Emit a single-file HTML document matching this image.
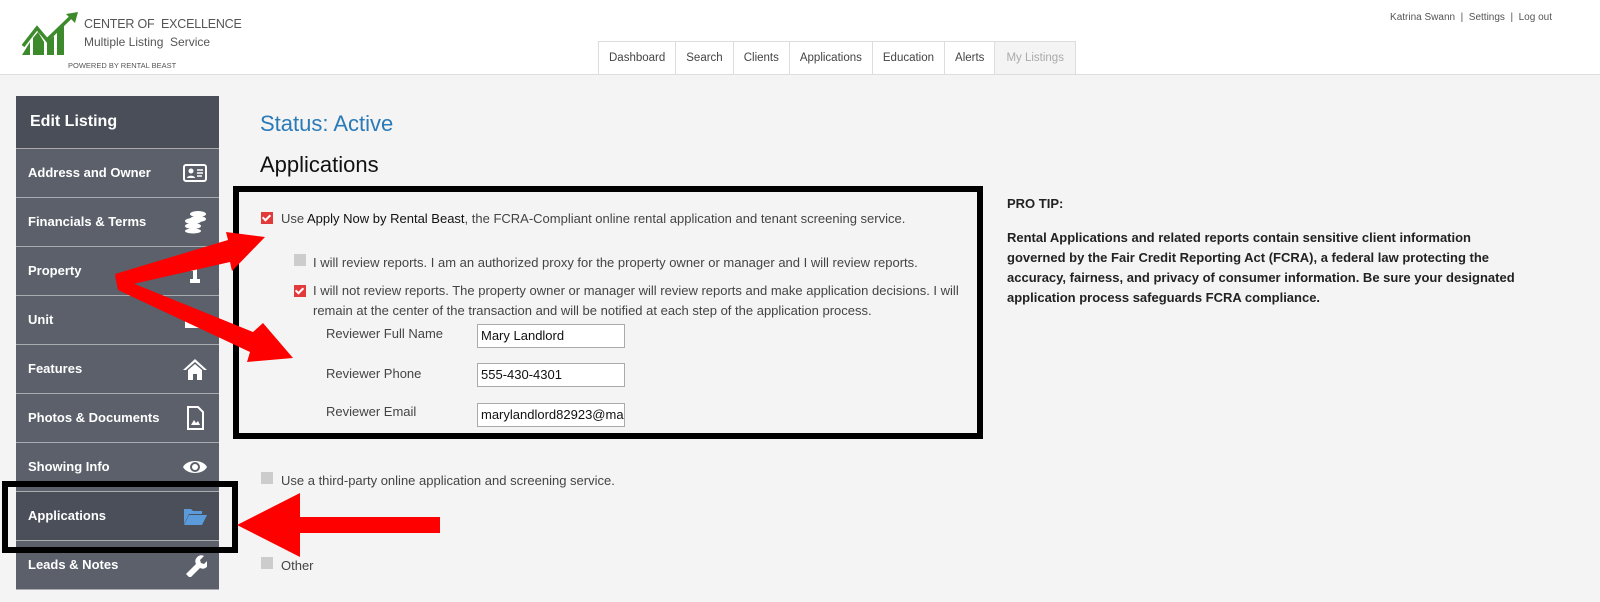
<!DOCTYPE html>
<html><head><style>
body{margin:0;width:1600px;height:602px;overflow:hidden;background:#f4f4f4;font-family:"Liberation Sans",sans-serif;position:relative}
.hdr{position:absolute;left:0;top:0;width:1600px;height:74px;background:#fff;border-bottom:1px solid #ddd}
.logo1{position:absolute;left:84px;top:17px;font-size:12.5px;color:#555;letter-spacing:-.2px}
.logo2{position:absolute;left:84px;top:35px;font-size:12px;color:#555}
.logo3{position:absolute;left:68px;top:61px;font-size:7.5px;color:#555}
.user{position:absolute;right:48px;top:12px;font-size:10px;color:#555}
.tabs{position:absolute;left:598px;top:41px;display:flex}
.tab{height:33px;box-sizing:border-box;border:1px solid #ddd;border-bottom:none;background:#fff;font-size:11.5px;color:#444;line-height:33px;padding:0 10px;margin-right:-1px}
.tab.act{background:#f4f4f4;color:#aaa;padding:0 11px}
.side{position:absolute;left:16px;top:96px;width:203px}
.sh{height:52px;background:#494e59;color:#fff;font-weight:bold;font-size:16px;line-height:52px;padding-left:14px;border-bottom:1px solid #aaa}
.si{height:48px;background:#5b606b;color:#fff;font-weight:bold;font-size:13px;line-height:48px;padding-left:12px;border-bottom:1px solid #a8abb0;position:relative}
.si.a{background:#4a4f5a}
.ic{position:absolute;right:12px;top:12px;width:24px;height:24px}
h1{position:absolute;left:260px;top:111px;margin:0;font-weight:normal;font-size:22px;color:#2a7ab8}
h2{position:absolute;left:260px;top:152px;margin:0;font-weight:normal;font-size:22px;color:#111}
.t{position:absolute;font-size:13px;color:#444;white-space:nowrap}
.cb{position:absolute;width:12px;height:12px;background:#ccc}
.cb.on{background:#e23a3a}
.cb.on:after{content:"";position:absolute;left:3px;top:1px;width:3px;height:6px;border:solid #fff;border-width:0 2px 2px 0;transform:rotate(45deg)}
.in{position:absolute;left:477px;width:148px;height:24px;box-sizing:border-box;border:1px solid #aaa;background:#fff;font-size:13px;color:#111;line-height:22px;padding-left:3px;overflow:hidden;white-space:nowrap}
.box{position:absolute;border:6px solid #000;box-sizing:border-box}
.pro{position:absolute;left:1007px;font-size:13px;font-weight:bold;color:#222;line-height:20px}
</style></head><body>
<div class="hdr">
<svg style="position:absolute;left:20px;top:12px" width="60" height="45" viewBox="0 0 60 45"><g fill="#3d8a2c"><polygon points="2,43 10,30 10,43"/><polygon points="13,26 18,20 24,30 24,43 13,43"/><polygon points="27,30 34,24 34,43 27,43"/><polygon points="37,20 44,12 44,43 37,43"/><polyline points="3,34 17,16 27,28 52,4" fill="none" stroke="#3d8a2c" stroke-width="3.5"/><polygon points="46,2 58,0 55,11"/></g></svg>
<div class="logo1">CENTER OF&nbsp; EXCELLENCE</div>
<div class="logo2">Multiple Listing&nbsp; Service</div>
<div class="logo3">POWERED BY RENTAL BEAST</div>
<div class="user">Katrina Swann&nbsp; |&nbsp; Settings&nbsp; |&nbsp; Log out</div>
<div class="tabs"><div class="tab">Dashboard</div><div class="tab">Search</div><div class="tab">Clients</div><div class="tab">Applications</div><div class="tab">Education</div><div class="tab">Alerts</div><div class="tab act">My Listings</div></div>
</div>
<div class="side">
<div class="sh">Edit Listing</div>
<div class="si">Address and Owner<svg class="ic" viewBox="0 0 24 24"><rect x="1" y="4" width="22" height="16" rx="2" fill="none" stroke="#fff" stroke-width="2"/><circle cx="8" cy="10" r="2.5" fill="#fff"/><path d="M4 17c0-3 8-3 8 0z" fill="#fff"/><path d="M14 9h6M14 12h6M14 15h5" stroke="#fff" stroke-width="1.5"/></svg></div>
<div class="si">Financials &amp; Terms<svg class="ic" viewBox="0 0 24 24" fill="#fff"><ellipse cx="15" cy="4" rx="8" ry="3"/><ellipse cx="15" cy="9" rx="8" ry="3"/><ellipse cx="10" cy="11" rx="8" ry="3"/><ellipse cx="10" cy="16" rx="8" ry="3"/><ellipse cx="10" cy="21" rx="8" ry="2.5"/></svg></div>
<div class="si">Property<svg class="ic" viewBox="0 0 24 24" fill="#fff"><circle cx="12" cy="3" r="3"/><path d="M8 8h6v12h3v4H7v-4h3v-8H8z"/></svg></div>
<div class="si">Unit<svg class="ic" viewBox="0 0 24 24" fill="#fff"><path d="M2 10h4v4h12v-4h4v10H2z"/></svg></div>
<div class="si">Features<svg class="ic" viewBox="0 0 24 24" fill="#fff"><path d="M12 2L0 13h3l9-8 9 8h3z"/><path d="M5 13l7-6 7 6v10h-5v-6h-4v6H5z"/></svg></div>
<div class="si">Photos &amp; Documents<svg class="ic" viewBox="0 0 24 24"><path d="M5 1h10l5 5v17H5z" fill="none" stroke="#fff" stroke-width="2"/><path d="M8 19l3-5 2 3 2-2 2 4z" fill="#fff"/></svg></div>
<div class="si">Showing Info<svg class="ic" viewBox="0 0 24 24"><path d="M0 12c4-8 20-8 24 0c-4 8-20 8-24 0z" fill="#fff"/><circle cx="12" cy="12" r="5" fill="#5b606b"/><circle cx="12" cy="12" r="3" fill="#fff"/></svg></div>
<div class="si a">Applications<svg class="ic" viewBox="0 0 24 24" fill="#5b9bdc"><path d="M1 5h7l2 2h9v3H6L1 20z"/><path d="M6 11h18l-5 10H1z"/></svg></div>
<div class="si">Leads &amp; Notes<svg class="ic" viewBox="0 0 24 24" fill="#fff"><path d="M3 21l10-10a6 6 0 0 1 8-8l-4 4 1 3 3 1 4-4a6 6 0 0 1-8 8L7 25z"/></svg></div>
</div>
<h1>Status: Active</h1>
<h2>Applications</h2>
<div class="box" style="left:233px;top:186px;width:750px;height:253px"></div>
<div class="cb on" style="left:261px;top:212px"></div>
<div class="t" style="left:281px;top:211px">Use <span style="color:#111">Apply Now by Rental Beast</span>, the FCRA-Compliant online rental application and tenant screening service.</div>
<div class="cb" style="left:294px;top:254px"></div>
<div class="t" style="left:313px;top:255px">I will review reports. I am an authorized proxy for the property owner or manager and I will review reports.</div>
<div class="cb on" style="left:294px;top:285px"></div>
<div class="t" style="left:313px;top:281px;line-height:20px">I will not review reports. The property owner or manager will review reports and make application decisions. I will<br>remain at the center of the transaction and will be notified at each step of the application process.</div>
<div class="t" style="left:326px;top:326px">Reviewer Full Name</div>
<div class="t" style="left:326px;top:366px">Reviewer Phone</div>
<div class="t" style="left:326px;top:404px">Reviewer Email</div>
<div class="in" style="top:324px">Mary Landlord</div>
<div class="in" style="top:363px">555-430-4301</div>
<div class="in" style="top:403px">marylandlord82923@mail.com</div>
<div class="cb" style="left:261px;top:472px"></div>
<div class="t" style="left:281px;top:473px">Use a third-party online application and screening service.</div>
<div class="t" style="left:281px;top:518px">No online application</div>
<div class="cb" style="left:261px;top:557px"></div>
<div class="t" style="left:281px;top:558px">Other</div>
<div class="pro" style="top:194px">PRO TIP:</div>
<div class="pro" style="top:228px">Rental Applications and related reports contain sensitive client information<br>governed by the Fair Credit Reporting Act (FCRA), a federal law protecting the<br>accuracy, fairness, and privacy of consumer information. Be sure your designated<br>application process safeguards FCRA compliance.</div>
<div class="box" style="left:2px;top:481px;width:236px;height:72px"></div>
<svg style="position:absolute;left:0;top:0" width="1600" height="602">
<g fill="#f00" stroke="none">
<polygon points="115,274 228,240 226,232 265,237 232,271 230,262 120,287"/>
<polygon points="115,276 253,332 263,323 293,358 247,362 250,352 118,290"/>
<polygon points="440,517 300,517 300,493 237,525 300,557 300,533 440,533"/>
</g></svg>
</body></html>
